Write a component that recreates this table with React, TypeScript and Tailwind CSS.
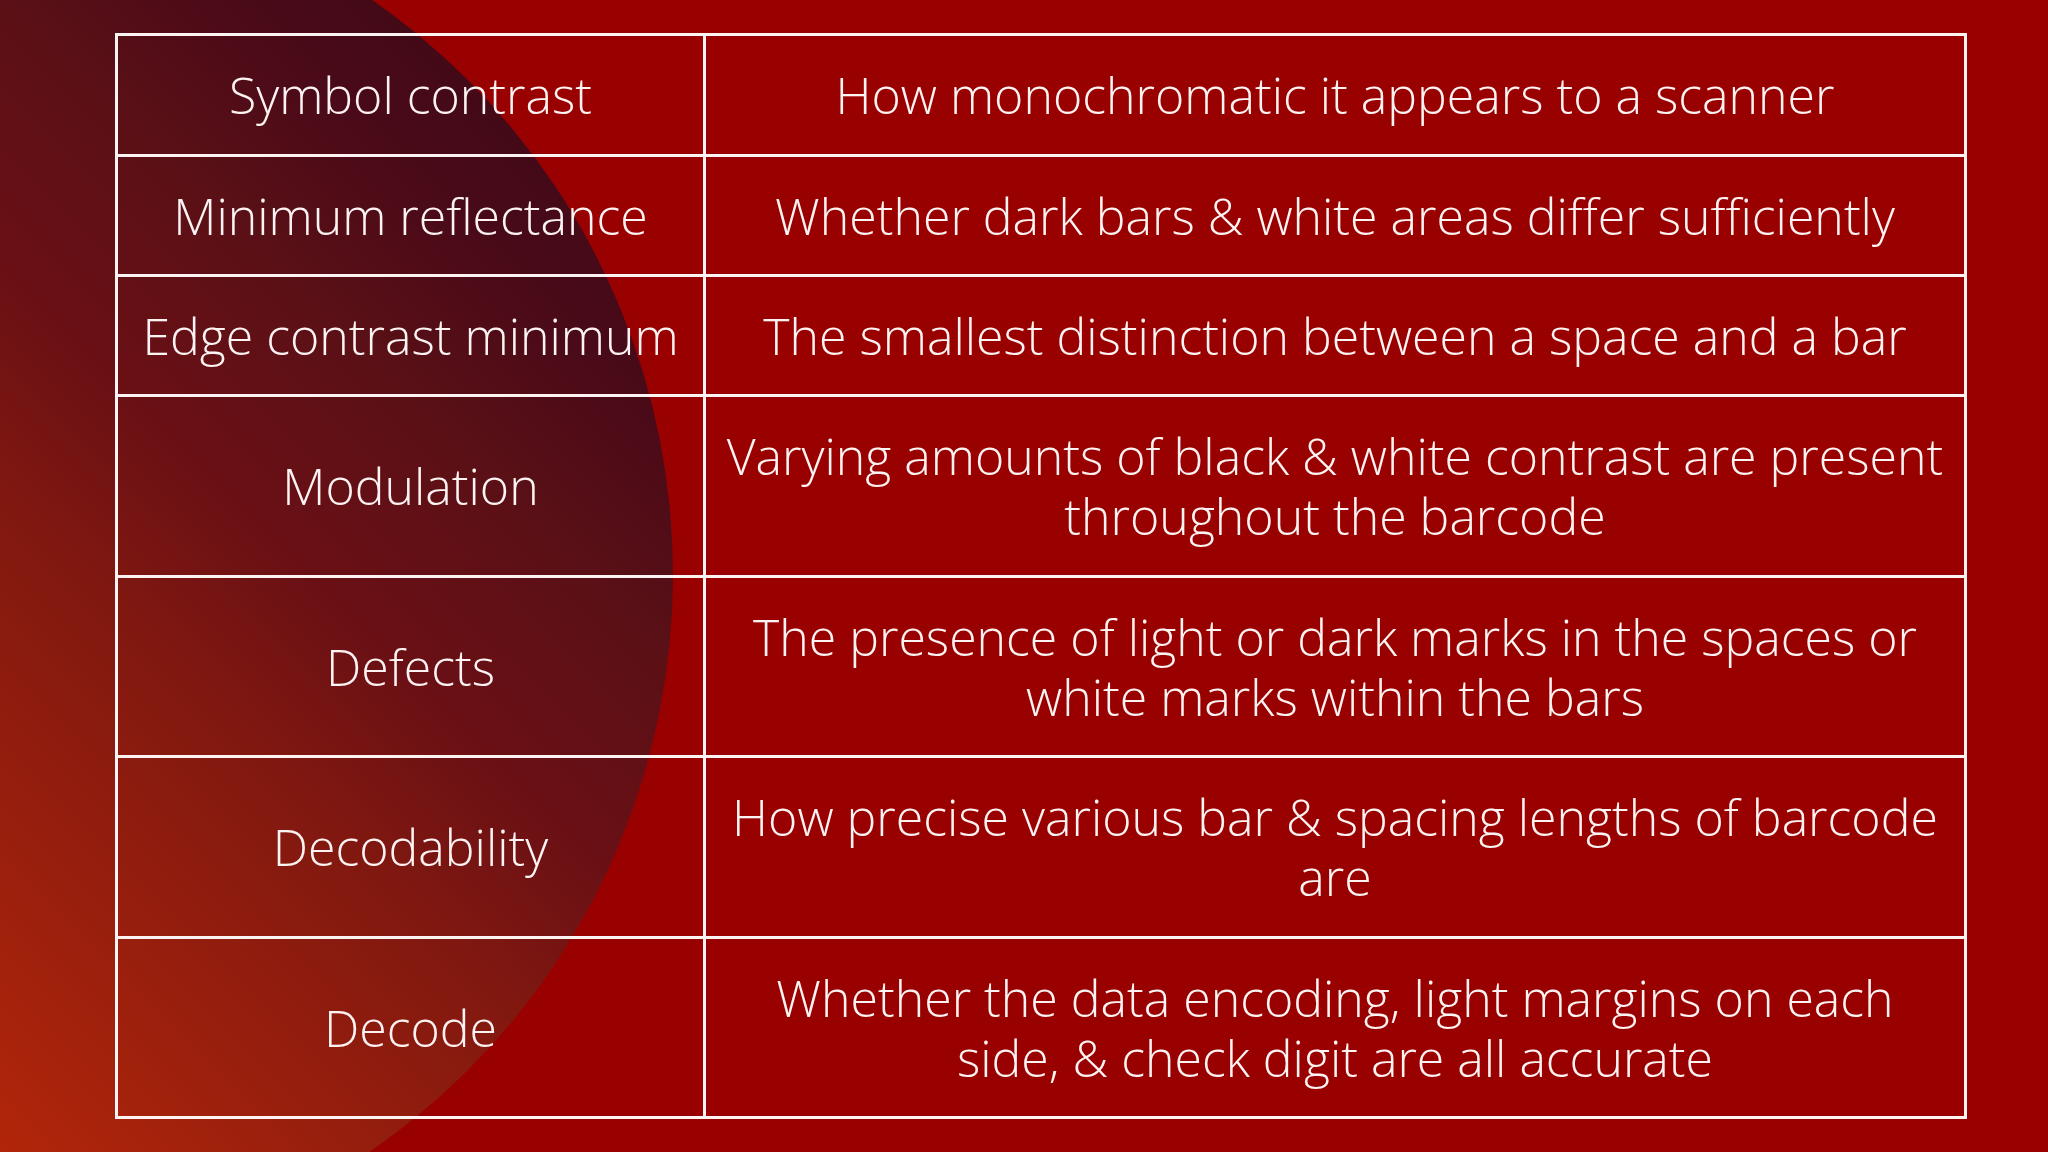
import React from "react";

const rows: { label: string; lines: string[]; h: string }[] = [
  { label: "Symbol contrast", lines: ["How monochromatic it appears to a scanner"], h: "h-[121px]" },
  { label: "Minimum reflectance", lines: ["Whether dark bars & white areas differ sufficiently"], h: "h-[120px]" },
  { label: "Edge contrast minimum", lines: ["The smallest distinction between a space and a bar"], h: "h-[120px]" },
  { label: "Modulation", lines: ["Varying amounts of black & white contrast are present", "throughout the barcode"], h: "h-[181px]" },
  { label: "Defects", lines: ["The presence of light or dark marks in the spaces or", "white marks within the bars"], h: "h-[180px]" },
  { label: "Decodability", lines: ["How precise various bar & spacing lengths of barcode", "are"], h: "h-[181px]" },
  { label: "Decode", lines: ["Whether the data encoding, light margins on each", "side, & check digit are all accurate"], h: "h-[180px]" },
];

export default function App() {
  return (
    <div className="relative w-[2048px] h-[1152px] overflow-hidden bg-[#990000] font-['Open_Sans',sans-serif] text-[#fdf3f3]">
      {/* dark disc on the left */}
      <div className="absolute left-[-727px] top-[-125px] w-[1400px] h-[1400px] rounded-full bg-[linear-gradient(45deg,#b8280a_0%,#b2260a_30%,#801810_54%,#6a1015_62%,#5a1016_72%,#4a0a18_80%,#380816_95%)]" />

      <div className="relative pl-[115px] pt-[33px]">
        <table className="w-[1852px] border-collapse border-[3px] border-[#fdf3f3] table-fixed">
          <colgroup>
            <col className="w-[588px]" />
            <col />
          </colgroup>
          <tbody>
            {rows.map((r) => (
              <tr key={r.label} className={r.h}>
                <td className="border-[3px] border-[#fdf3f3] text-center align-middle text-[50px] font-[350] leading-[60px] whitespace-nowrap">
                  {r.label}
                </td>
                <td className="border-[3px] border-[#fdf3f3] text-center align-middle text-[50px] font-[350] leading-[60px] whitespace-nowrap">
                  {r.lines.map((l) => (
                    <div key={l}>{l}</div>
                  ))}
                </td>
              </tr>
            ))}
          </tbody>
        </table>
      </div>
    </div>
  );
}
